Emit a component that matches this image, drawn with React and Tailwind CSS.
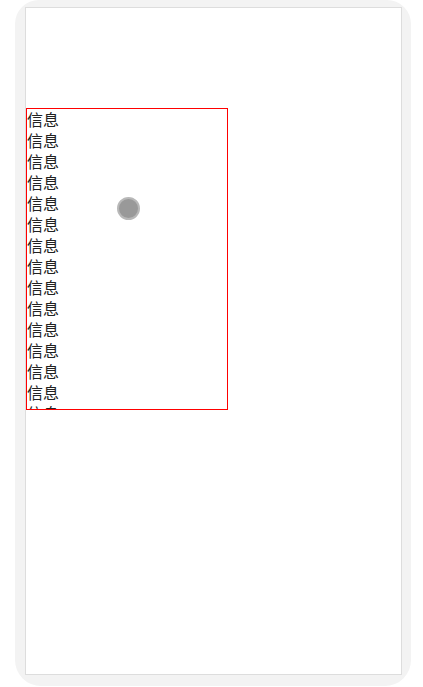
const App = () => {
  const rows = Array.from({ length: 20 }, (_, i) => i)

  return (
    <div className="w-[423px] h-[687px] bg-white overflow-hidden">
      {/* Рамка устройства */}
      <div className="ml-[15px] w-[396px] h-[686px] bg-[#f3f3f3] rounded-b-[26px] rounded-t-[24px] pt-[7px] pl-[10px] pr-[9px] pb-[11px]">
        {/* Экран */}
        <div className="h-full bg-white border border-[#dddddd]">
          <div className="h-[100px]" />
          {/* Прокручиваемый блок */}
          <div className="relative w-[202px] h-[302px] border border-[#ff0000] overflow-hidden">
            <div
              className="text-[16px] leading-[21px] text-[#222]"
              style={{ fontFamily: '"Noto Sans CJK SC", sans-serif' }}
            >
              {rows.map((i) => (
                <div key={i}>信息</div>
              ))}
            </div>
            <div className="absolute left-[90px] top-[88px] w-[23px] h-[23px] rounded-full bg-[#999999] border-2 border-[#b8b8b8]" />
          </div>
        </div>
      </div>
    </div>
  )
}

export default App
